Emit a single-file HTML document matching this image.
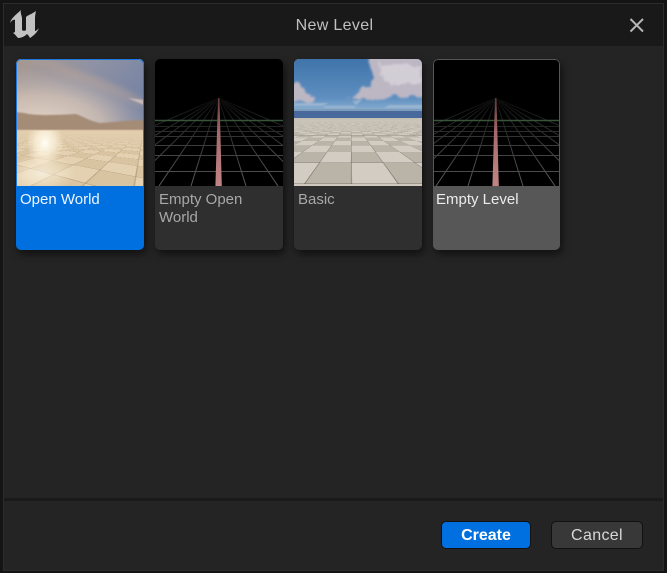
<!DOCTYPE html>
<html><head><meta charset="utf-8"><style>
*{box-sizing:border-box;margin:0;padding:0}
html,body{width:667px;height:573px;overflow:hidden;background:#141414;font-family:"Liberation Sans",sans-serif}
.win{position:absolute;left:3px;top:3px;width:661px;height:568px;background:#242424;border:1px solid #2c2c2c}
.title{position:absolute;left:4px;top:4px;width:659px;height:42px;background:#191919}
.t{position:absolute;left:1px;width:667px;top:17px;text-align:center;font-size:16px;letter-spacing:.35px;color:#c0c0c0;line-height:18px}
.div{position:absolute;left:4px;top:498px;width:659px;height:3px;background:#1a1a1a}
.card{position:absolute;top:59px;width:128px;height:191px;border-radius:5px;background:#2f2f2f;box-shadow:2px 4px 8px rgba(0,0,0,.55);overflow:hidden}
.img{position:absolute;left:0;top:0;width:128px;height:127px;overflow:hidden;background:#000}
.lab{position:absolute;left:4px;top:132px;width:120px;font-size:15px;line-height:18px;letter-spacing:0;color:#a8a8a8}
.floor{position:absolute}
.frame{position:absolute;inset:0;border-radius:5px;pointer-events:none}
.btn{position:absolute;top:521px;height:28px;border-radius:5px;text-align:center;font-size:16px;line-height:27px;border:1px solid #111}
</style></head><body>
<div class="win"></div>
<div class="title"></div>
<div class="t">New Level</div>
<svg style="position:absolute;left:0;top:0" width="50" height="46"><path fill="#c2c2c2" d="M21 10C20 13 22 16 22 18L22 30C23 31 25 31 26 30L26 17C28 15 32 14 36 11C35 15 35 18 35 20L35 31C36 31 37 30 39 28C37 33 33 36 30 38C29 36 28 35 27 34C25 36 22 38 18 38C16 36 15 34 13 33L15 32L15 20C14 19 12 20 10 23C11 18 17 14 21 10Z"/></svg>
<svg style="position:absolute;left:625px;top:14px" width="24" height="24"><path d="M5.5 5L18 17.5M18 5L5.5 17.5" stroke="#b8b8b8" stroke-width="2" fill="none"/></svg>

<!-- Card 1 -->
<div class="card" style="left:16px;background:#0070e0">
 <div class="img" style="background:#ddc9a8">
  <svg style="position:absolute;left:0;top:0" width="128" height="127">
   <defs>
    <linearGradient id="a" x1="0" y1="0" x2="1" y2=".55"><stop offset="0" stop-color="#a89a92"/><stop offset=".5" stop-color="#8f92a4"/><stop offset="1" stop-color="#7583a4"/></linearGradient>
    <radialGradient id="g" cx=".2" cy="1" r=".9"><stop offset="0" stop-color="#ecdccd"/><stop offset=".55" stop-color="#d4c2b4" stop-opacity=".8"/><stop offset="1" stop-color="#c0b0a8" stop-opacity="0"/></radialGradient>
    <filter id="b3"><feGaussianBlur stdDeviation="4"/></filter>
    <filter id="b1"><feGaussianBlur stdDeviation=".8"/></filter>
   </defs>
   <rect width="128" height="72" fill="url(#a)"/>
   <rect width="128" height="72" fill="url(#g)"/>
   <path d="M8 2C30 4 40 14 60 20S100 34 128 48L128 41C105 30 75 16 50 8S20 0 8 2Z" fill="#bfa696" opacity=".55" filter="url(#b3)"/>
   <path d="M112 39L128 46L128 41Z" fill="#d8c7c0" opacity=".8" filter="url(#b1)"/>
   <path d="M0 53L8 54C20 57 40 56 60 55C68 58 74 62 84 64C100 63 115 61 128 61L128 72L0 72Z" fill="#a58c77" filter="url(#b1)"/>
  </svg>
  <div style="position:absolute;left:0;top:71px;width:128px;height:56px;overflow:hidden;perspective:110px;perspective-origin:64px 0">
   <div class="floor" style="left:-536px;top:-555px;width:1200px;height:1200px;transform:rotateX(90deg) rotateZ(30deg);background:linear-gradient(90deg,rgba(130,105,75,.45) 1.2px,transparent 1.2px) 0 0/36px 36px,linear-gradient(rgba(130,105,75,.45) 1.2px,transparent 1.2px) 0 0/36px 36px,repeating-conic-gradient(#d9c4a1 0 25%,#e4d1b1 0 50%) 0 0/72px 72px"></div>
  </div>
  <svg style="position:absolute;left:0;top:0" width="128" height="127">
   <defs>
    <linearGradient id="fh" x1="0" y1="0" x2="0" y2="1"><stop offset="0" stop-color="#e2ceae"/><stop offset="1" stop-color="#e2ceae" stop-opacity="0"/></linearGradient>
    <radialGradient id="sun"><stop offset="0" stop-color="#fffdf4"/><stop offset=".5" stop-color="#fff6e0" stop-opacity=".7"/><stop offset="1" stop-color="#fff0d8" stop-opacity="0"/></radialGradient>
    <clipPath id="cf"><rect y="71" width="128" height="56"/></clipPath>
   </defs>
   <rect y="71" width="128" height="20" fill="url(#fh)"/>
   <g clip-path="url(#cf)">
    <ellipse cx="29" cy="84" rx="19" ry="24" fill="url(#sun)"/>
    <ellipse cx="26" cy="114" rx="34" ry="20" fill="url(#sun)" opacity=".6"/>
   </g>
   <rect y="70.5" width="128" height="1" fill="#cdb69a" opacity=".8"/>
  </svg>
 </div>
 <div class="lab" style="color:#f0f6ff">Open World</div>
 <div class="frame" style="border:1px solid #1a78e0;height:127px;border-bottom:0;border-radius:5px 5px 0 0"></div>
</div>

<!-- Card 2 -->
<div class="card" style="left:155px">
 <div class="img">
  <svg width="128" height="127">
   <defs>
    <linearGradient id="gr" gradientUnits="userSpaceOnUse" x1="0" y1="39" x2="0" y2="127"><stop offset="0" stop-color="#080808"/><stop offset=".26" stop-color="#242424"/><stop offset=".65" stop-color="#444"/><stop offset="1" stop-color="#5c5c5c"/></linearGradient>
    <linearGradient id="st" gradientUnits="userSpaceOnUse" x1="0" y1="39" x2="0" y2="127"><stop offset="0" stop-color="#5e3838"/><stop offset=".4" stop-color="#a56b6c"/><stop offset="1" stop-color="#c28586"/></linearGradient>
   </defs>
   <g stroke="url(#gr)" stroke-width="1" fill="none">
    <path d="M63.5 39L4 127M63.5 39L36 127M63.5 39L91 127M63.5 39L123 127M63.5 39L-26 127M63.5 39L153 127M63.5 39L-56 127M63.5 39L183 127M63.5 39L-86 127M63.5 39L213 127M63.5 39L-140 127M63.5 39L267 127"/>
   </g>
   <path d="M0 112.5H128" stroke="#4c4c4c"/><path d="M0 96.5H128" stroke="#434343"/><path d="M0 86.5H128" stroke="#3c3c3c"/><path d="M0 77.5H128" stroke="#333"/><path d="M0 72.5H128" stroke="#2c2c2c"/><path d="M0 67.5H128" stroke="#242424"/>
   <path d="M0 61.5H128" stroke="#38553a" stroke-width="1.4"/>
   <path d="M63 39L64.5 39L66.8 127L60.4 127Z" fill="url(#st)"/>
  </svg>
 </div>
 <div class="lab">Empty Open World</div>
</div>

<!-- Card 3 -->
<div class="card" style="left:294px">
 <div class="img" style="background:#cfc9bf">
  <svg style="position:absolute;left:0;top:0" width="128" height="127">
   <defs>
    <linearGradient id="s" x1="0" y1="0" x2="0" y2="1"><stop offset="0" stop-color="#3f74aa"/><stop offset=".75" stop-color="#5f8fc0"/><stop offset="1" stop-color="#8bb0d0"/></linearGradient>
    <filter id="c" x="-20%" y="-20%" width="140%" height="140%"><feTurbulence type="fractalNoise" baseFrequency=".09" numOctaves="3" seed="4"/><feDisplacementMap in="SourceGraphic" scale="12" xChannelSelector="R" yChannelSelector="G"/><feGaussianBlur stdDeviation="1.1"/></filter>
    <filter id="c2"><feGaussianBlur stdDeviation=".7"/></filter>
   </defs>
   <rect width="128" height="52" fill="url(#s)"/>
   <g filter="url(#c)" fill="#bdb7c4">
    <path d="M72 -6L134 -6L134 36C115 40 100 34 88 40C78 43 62 42 56 38C60 32 70 34 76 26C82 20 76 8 72 -6Z"/>
    <path d="M-4 26C8 28 16 34 20 41C12 43 4 42 -4 42Z"/>
   </g>
   <g filter="url(#c)" fill="#dcd8de" opacity=".7">
    <path d="M85 4L128 8L128 26L95 24C88 20 88 12 85 4Z"/>
   </g>
   <g filter="url(#c2)" fill="#a8bdd4" opacity=".7">
    <path d="M0 44H35L28 47H0Z"/><path d="M30 47H62L60 49H30Z"/><path d="M58 42L68 41L62 46Z"/><path d="M95 46H128V49H90Z"/>
   </g>
   <rect y="50" width="128" height="3" fill="#7e9dbd"/>
   <rect y="52" width="128" height="8" fill="#47699b"/>
  </svg>
  <div style="position:absolute;left:0;top:59px;width:128px;height:68px;overflow:hidden;perspective:100px;perspective-origin:57px 0">
   <div class="floor" style="left:-883px;top:-1814px;width:1880px;height:1880px;transform-origin:50% 100%;transform:rotateX(90deg);background:linear-gradient(90deg,rgba(80,75,68,.6) 1.2px,transparent 1.2px) 0 0/47px 47px,linear-gradient(0deg,rgba(80,75,68,.45) 1px,transparent 1px) 0 100%/47px 47px,repeating-conic-gradient(#d2ccc2 0 25%,#bab4a8 0 50%) 0 100%/94px 94px"></div>
  </div>
  <svg style="position:absolute;left:0;top:59px" width="128" height="68">
   <defs><linearGradient id="fh2" x1="0" y1="0" x2="0" y2="1"><stop offset="0" stop-color="#c8c2b6"/><stop offset="1" stop-color="#c8c2b6" stop-opacity="0"/></linearGradient></defs>
   <rect width="128" height="16" fill="url(#fh2)"/>
  </svg>
 </div>
 <div class="lab">Basic</div>
</div>

<!-- Card 4 -->
<div class="card" style="left:433px;width:127px;background:#575757">
 <div class="img" style="width:127px">
  <svg width="127" height="127">
   <g stroke="url(#gr)" stroke-width="1" fill="none">
    <path d="M62.5 39L3 127M62.5 39L35 127M62.5 39L90 127M62.5 39L122 127M62.5 39L-27 127M62.5 39L152 127M62.5 39L-57 127M62.5 39L182 127M62.5 39L-87 127M62.5 39L212 127M62.5 39L-141 127M62.5 39L266 127"/>
   </g>
   <path d="M0 112.5H127" stroke="#4c4c4c"/><path d="M0 96.5H127" stroke="#434343"/><path d="M0 86.5H127" stroke="#3c3c3c"/><path d="M0 77.5H127" stroke="#333"/><path d="M0 72.5H127" stroke="#2c2c2c"/><path d="M0 67.5H127" stroke="#242424"/>
   <path d="M0 61.5H127" stroke="#38553a" stroke-width="1.4"/>
   <path d="M62 39L63.5 39L65.8 127L59.4 127Z" fill="url(#st)"/>
  </svg>
 </div>
 <div class="lab" style="left:3px;color:#ececec">Empty Level</div>
 <div class="frame" style="border:1px solid #575757"></div>
</div>

<div class="div"></div>
<div class="btn" style="left:441px;width:90px;background:#0070e0;color:#fff;font-weight:bold">Create</div>
<div class="btn" style="left:551px;width:92px;background:#383838;color:#d8d8d8;letter-spacing:.35px">Cancel</div>
</body></html>
